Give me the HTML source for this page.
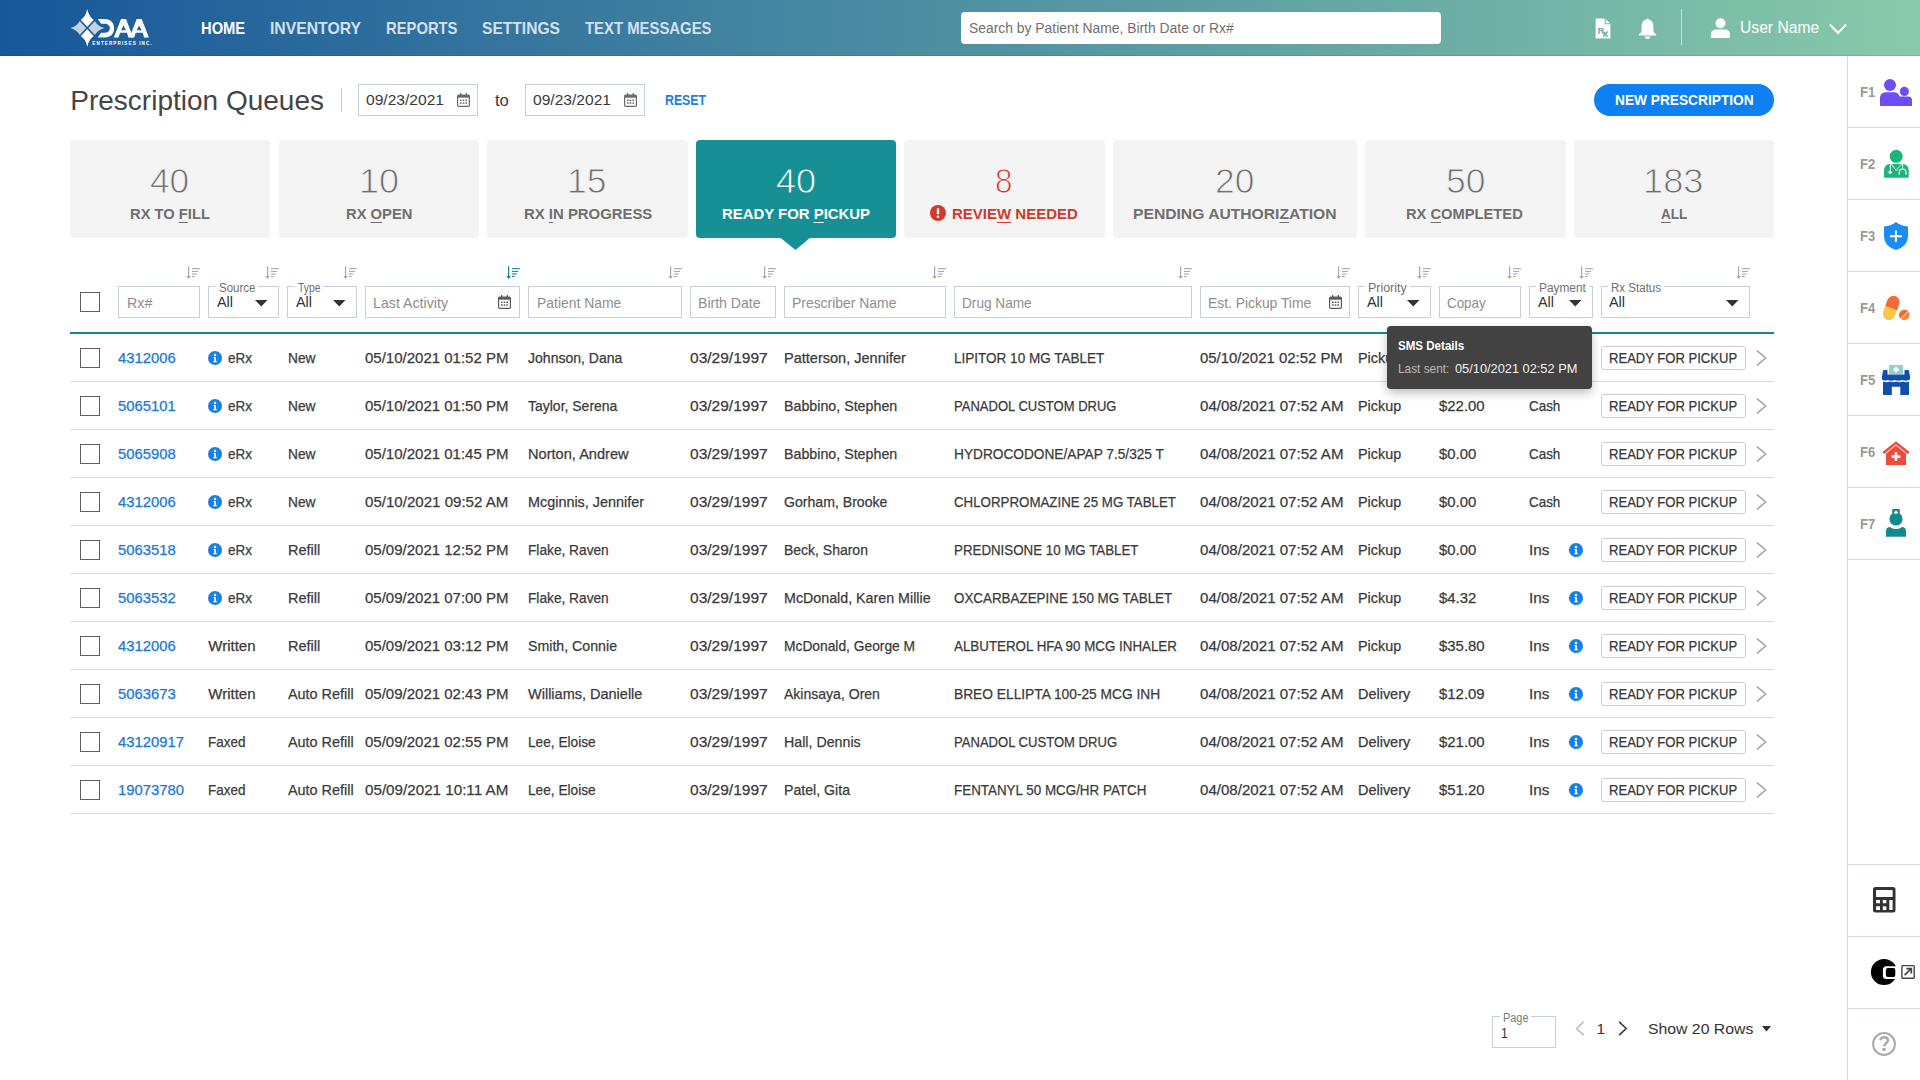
<!DOCTYPE html>
<html><head><meta charset="utf-8"><title>Prescription Queues</title>
<style>
*{box-sizing:border-box;margin:0;padding:0}
html,body{width:1920px;height:1080px;overflow:hidden;background:#fff;font-family:"Liberation Sans",sans-serif;color:#333}
.a{position:absolute;white-space:nowrap}
svg.a{overflow:visible}
</style></head><body>

<div class="a" style="left:0px;top:0px;width:1920px;height:56px;background:linear-gradient(90deg,#18579a 0%,#4f90a2 50%,#88caa9 100%)"></div>
<div class="a" style="left:0px;top:55px;width:1920px;height:1px;background:rgba(0,30,80,.12)"></div>
<svg class="a" style="left:66px;top:6px" width="92" height="44" viewBox="0 0 92 44">
<path d="M21.3,3.5 Q23,11.5 28.6,14.4 Q31,20 38.6,22 Q31,24 28.6,29.6 Q23,32.5 21.3,40.5 Q19.6,32.5 14,29.6 Q11.6,24 4.2,22 Q11.6,20 14,14.4 Q19.6,11.5 21.3,3.5 Z" fill="#c5d2e3"/>
<path d="M21.3,3.5 Q23,11.5 28.6,14.4 L21.3,22 L14,14.4 Q19.6,11.5 21.3,3.5 Z" fill="#fff"/>
<path d="M21.3,40.5 Q23,32.5 28.6,29.6 L21.3,22 L14,29.6 Q19.6,32.5 21.3,40.5 Z" fill="#fff"/>
<path d="M12.5,12.5 L30.1,31.5 M30.1,12.5 L12.5,31.5" stroke="#1d5c9c" stroke-width="1.7"/>
<path fill-rule="evenodd" d="M31.8,13 H38.5 C45,13 48.1,17 48.1,22.2 C48.1,27.4 45,31.4 38.5,31.4 H31.8 L35.1,26.7 H38.5 C42,26.7 43.9,24.8 43.9,22.2 C43.9,19.6 42,17.7 38.5,17.7 H35.1 Z" fill="#fff"/>
<path fill-rule="evenodd" d="M47.8,31.4 L55,13 H60 L67.2,31.4 H62.4 L61,26.7 H54 L52.6,31.4 Z M57.5,19.5 L55.1,24.3 H59.9 Z" fill="#fff"/>
<path fill-rule="evenodd" d="M63.5,31.4 L70.7,13 H75.7 L82.9,31.4 H78.1 L76.7,26.7 H69.7 L68.3,31.4 Z M73.2,19.5 L70.8,24.3 H75.6 Z" fill="#fff"/>
<text x="26.3" y="38.9" font-family="Liberation Sans" font-weight="bold" font-size="4.6" fill="#fff" letter-spacing="1.1">ENTERPRISES INC.</text>
</svg>
<div class="a" style="left:200.80px;top:20.200000000000003px;font-size:17px;line-height:17px;color:#fff;font-weight:bold;transform:scaleX(0.8667);transform-origin:0 0;">HOME</div>
<div class="a" style="left:270.00px;top:20.200000000000003px;font-size:17px;line-height:17px;color:#d3e0ee;font-weight:bold;transform:scaleX(0.9262);transform-origin:0 0;">INVENTORY</div>
<div class="a" style="left:386.00px;top:20.200000000000003px;font-size:17px;line-height:17px;color:#d3e0ee;font-weight:bold;transform:scaleX(0.8698);transform-origin:0 0;">REPORTS</div>
<div class="a" style="left:482.00px;top:20.200000000000003px;font-size:17px;line-height:17px;color:#d3e0ee;font-weight:bold;transform:scaleX(0.9176);transform-origin:0 0;">SETTINGS</div>
<div class="a" style="left:585.00px;top:20.200000000000003px;font-size:17px;line-height:17px;color:#d3e0ee;font-weight:bold;transform:scaleX(0.8751);transform-origin:0 0;">TEXT MESSAGES</div>
<div class="a" style="left:961px;top:12px;width:480px;height:32px;background:#fff;border-radius:4px"></div>
<div class="a" style="left:969.40px;top:21px;font-size:14px;line-height:14px;color:#6f6f6f;transform:scaleX(0.9914);transform-origin:0 0;">Search by Patient Name, Birth Date or Rx#</div>
<svg class="a" style="left:1595px;top:18px" width="16" height="21" viewBox="0 0 16 21">
<path d="M0.6,0.6 H10.2 L15.4,5.8 V20.4 H0.6 Z" fill="#fff"/>
<path d="M10.2,0.6 V5.8 H15.4" fill="none" stroke="#78b9a6" stroke-width="1.1"/>
<text x="2.6" y="15.6" font-family="Liberation Sans" font-weight="bold" font-size="9.5" fill="#6fae9e">R</text>
<path d="M8.2,13.6 L12.6,18.6 M12.6,13.6 L8.2,18.6" stroke="#6fae9e" stroke-width="1.5"/>
</svg>
<svg class="a" style="left:1638px;top:18px" width="19" height="21" viewBox="0 0 19 21">
<circle cx="9.5" cy="1.6" r="1.2" fill="#fff"/>
<path d="M9.5,1.5 C5,1.5 3.6,5 3.6,8.5 V12.5 C3.6,14.5 2.3,15.5 0.8,16.2 V17.6 H18.2 V16.2 C16.7,15.5 15.4,14.5 15.4,12.5 V8.5 C15.4,5 14,1.5 9.5,1.5 Z" fill="#fff"/>
<path d="M6.6,18.4 H12.4 C12.4,20 11,20.8 9.5,20.8 C8,20.8 6.6,20 6.6,18.4 Z" fill="#fff"/>
</svg>
<div class="a" style="left:1681px;top:9px;width:1px;height:36px;background:#b6e8d6"></div>
<svg class="a" style="left:1711px;top:18px" width="19" height="20" viewBox="0 0 19 20">
<circle cx="9.5" cy="5.3" r="5" fill="#fff"/>
<path d="M0,20 V16 C0,13.2 2,11.6 4.8,11.6 H14.2 C17,11.6 19,13.2 19,16 V20 Z" fill="#fff"/>
</svg>
<div class="a" style="left:1740.00px;top:19.75px;font-size:16px;line-height:16px;color:#fff;transform:scaleX(0.9790);transform-origin:0 0;">User Name</div>
<svg class="a" style="left:1829px;top:23px" width="18" height="12" viewBox="0 0 18 12">
<path d="M1,1.5 L9,10 L17,1.5" fill="none" stroke="#fff" stroke-width="2"/>
</svg>
<div class="a" style="left:70.30px;top:87px;font-size:28px;line-height:28px;color:#454545;">Prescription Queues</div>
<div class="a" style="left:341px;top:88px;width:1px;height:24px;background:#c6c6c6"></div>
<div class="a" style="left:358px;top:84px;width:120px;height:32px;border:1px solid #c5d0d8"></div>
<div class="a" style="left:366.40px;top:93px;font-size:14.5px;line-height:14.5px;color:#393939;transform:scaleX(1.0751);transform-origin:0 0;">09/23/2021</div>
<svg class="a" style="left:457px;top:93px" width="13" height="14" viewBox="0 0 13 14">
<rect x="0.6" y="2.1" width="11.8" height="11.3" rx="1.2" fill="none" stroke="#6a6a6a" stroke-width="1.2"/>
<rect x="0.6" y="2.1" width="11.8" height="2.6" fill="#6a6a6a"/>
<rect x="3" y="0" width="1.3" height="3" fill="#6a6a6a"/><rect x="8.7" y="0" width="1.3" height="3" fill="#6a6a6a"/>
<g fill="#6a6a6a"><rect x="3" y="6.5" width="1.6" height="1.5"/><rect x="5.7" y="6.5" width="1.6" height="1.5"/><rect x="8.4" y="6.5" width="1.6" height="1.5"/>
<rect x="3" y="9.3" width="1.6" height="1.5"/><rect x="5.7" y="9.3" width="1.6" height="1.5"/><rect x="8.4" y="9.3" width="1.6" height="1.5"/></g>
</svg>
<div class="a" style="left:494.50px;top:92px;font-size:17px;line-height:17px;color:#393939;transform:scaleX(0.9789);transform-origin:0 0;">to</div>
<div class="a" style="left:525px;top:84px;width:120px;height:32px;border:1px solid #c5d0d8"></div>
<div class="a" style="left:533.40px;top:93px;font-size:14.5px;line-height:14.5px;color:#393939;transform:scaleX(1.0751);transform-origin:0 0;">09/23/2021</div>
<svg class="a" style="left:624px;top:93px" width="13" height="14" viewBox="0 0 13 14">
<rect x="0.6" y="2.1" width="11.8" height="11.3" rx="1.2" fill="none" stroke="#6a6a6a" stroke-width="1.2"/>
<rect x="0.6" y="2.1" width="11.8" height="2.6" fill="#6a6a6a"/>
<rect x="3" y="0" width="1.3" height="3" fill="#6a6a6a"/><rect x="8.7" y="0" width="1.3" height="3" fill="#6a6a6a"/>
<g fill="#6a6a6a"><rect x="3" y="6.5" width="1.6" height="1.5"/><rect x="5.7" y="6.5" width="1.6" height="1.5"/><rect x="8.4" y="6.5" width="1.6" height="1.5"/>
<rect x="3" y="9.3" width="1.6" height="1.5"/><rect x="5.7" y="9.3" width="1.6" height="1.5"/><rect x="8.4" y="9.3" width="1.6" height="1.5"/></g>
</svg>
<div class="a" style="left:665.40px;top:93px;font-size:14px;line-height:14px;color:#1a80e6;font-weight:bold;transform:scaleX(0.8801);transform-origin:0 0;">RESET</div>
<div class="a" style="left:1594px;top:84px;width:180px;height:32px;background:#0e80f2;border-radius:16px"></div>
<div class="a" style="left:1614.80px;top:92.8px;font-size:14px;line-height:14px;color:#fff;font-weight:bold;transform:scaleX(0.9792);transform-origin:0 0;">NEW PRESCRIPTION</div>
<div class="a" style="left:70px;top:140px;width:200.4px;height:98px;background:#f4f4f4;border-radius:4px"></div>
<div class="a" style="left:278.6px;top:140px;width:200.4px;height:98px;background:#f4f4f4;border-radius:4px"></div>
<div class="a" style="left:487.2px;top:140px;width:200.4px;height:98px;background:#f4f4f4;border-radius:4px"></div>
<div class="a" style="left:695.8px;top:140px;width:200.4px;height:98px;background:#169095;border-radius:4px"></div>
<div class="a" style="left:904.4px;top:140px;width:200.4px;height:98px;background:#f4f4f4;border-radius:4px"></div>
<div class="a" style="left:1113.2px;top:140px;width:243.6px;height:98px;background:#f4f4f4;border-radius:4px"></div>
<div class="a" style="left:1365.2px;top:140px;width:200.4px;height:98px;background:#f4f4f4;border-radius:4px"></div>
<div class="a" style="left:1573.8px;top:140px;width:200.4px;height:98px;background:#f4f4f4;border-radius:4px"></div>
<svg class="a" style="left:779px;top:237px" width="33" height="14" viewBox="0 0 33 14"><polygon points="0.5,0 32,0 16.5,13" fill="#169095"/></svg>
<div class="a" style="left:150.00px;top:162.8px;font-size:35px;line-height:35px;color:#6f6f6f;transform:scaleX(1.0064);transform-origin:0 0;-webkit-text-stroke:0.9px #f4f4f4;">40</div>
<div class="a" style="left:358.70px;top:162.8px;font-size:35px;line-height:35px;color:#6f6f6f;transform:scaleX(1.0295);transform-origin:0 0;-webkit-text-stroke:0.9px #f4f4f4;">10</div>
<div class="a" style="left:566.80px;top:162.8px;font-size:35px;line-height:35px;color:#6f6f6f;transform:scaleX(1.0116);transform-origin:0 0;-webkit-text-stroke:0.9px #f4f4f4;">15</div>
<div class="a" style="left:775.60px;top:162.8px;font-size:35px;line-height:35px;color:#fff;transform:scaleX(1.0295);transform-origin:0 0;-webkit-text-stroke:0.9px #169095;">40</div>
<div class="a" style="left:994.50px;top:162.8px;font-size:35px;line-height:35px;color:#cf3a2a;transform:scaleX(0.8997);transform-origin:0 0;-webkit-text-stroke:0.9px #f4f4f4;">8</div>
<div class="a" style="left:1215.40px;top:162.8px;font-size:35px;line-height:35px;color:#6f6f6f;transform:scaleX(1.0116);transform-origin:0 0;-webkit-text-stroke:0.9px #f4f4f4;">20</div>
<div class="a" style="left:1445.60px;top:162.8px;font-size:35px;line-height:35px;color:#6f6f6f;transform:scaleX(1.0141);transform-origin:0 0;-webkit-text-stroke:0.9px #f4f4f4;">50</div>
<div class="a" style="left:1643.40px;top:162.8px;font-size:35px;line-height:35px;color:#6f6f6f;transform:scaleX(1.0360);transform-origin:0 0;-webkit-text-stroke:0.9px #f4f4f4;">183</div>
<div class="a" style="left:130.10px;top:205.8px;font-size:15px;line-height:15px;color:#6f6f6f;font-weight:bold;transform:scaleX(0.9816);transform-origin:0 0;">RX TO <span style="text-decoration:underline;text-underline-offset:3px;text-decoration-thickness:1px">F</span>ILL</div>
<div class="a" style="left:345.60px;top:205.8px;font-size:15px;line-height:15px;color:#6f6f6f;font-weight:bold;transform:scaleX(0.9837);transform-origin:0 0;">RX <span style="text-decoration:underline;text-underline-offset:3px;text-decoration-thickness:1px">O</span>PEN</div>
<div class="a" style="left:523.70px;top:205.8px;font-size:15px;line-height:15px;color:#6f6f6f;font-weight:bold;transform:scaleX(0.9930);transform-origin:0 0;">RX <span style="text-decoration:underline;text-underline-offset:3px;text-decoration-thickness:1px">I</span>N PROGRESS</div>
<div class="a" style="left:722.00px;top:205.8px;font-size:15px;line-height:15px;color:#fff;font-weight:bold;transform:scaleX(0.9940);transform-origin:0 0;">READY FOR <span style="text-decoration:underline;text-underline-offset:3px;text-decoration-thickness:1px">P</span>ICKUP</div>
<div class="a" style="left:952.00px;top:205.8px;font-size:15px;line-height:15px;color:#cf3a2a;font-weight:bold;">REVIE<span style="text-decoration:underline;text-underline-offset:3px;text-decoration-thickness:1px">W</span> NEEDED</div>
<div class="a" style="left:1132.60px;top:205.8px;font-size:15px;line-height:15px;color:#6f6f6f;font-weight:bold;transform:scaleX(1.0441);transform-origin:0 0;">PENDING AUTHORI<span style="text-decoration:underline;text-underline-offset:3px;text-decoration-thickness:1px">Z</span>ATION</div>
<div class="a" style="left:1406.40px;top:205.8px;font-size:15px;line-height:15px;color:#6f6f6f;font-weight:bold;transform:scaleX(0.9794);transform-origin:0 0;">RX <span style="text-decoration:underline;text-underline-offset:3px;text-decoration-thickness:1px">C</span>OMPLETED</div>
<div class="a" style="left:1660.90px;top:205.8px;font-size:15px;line-height:15px;color:#6f6f6f;font-weight:bold;transform:scaleX(0.8954);transform-origin:0 0;"><span style="text-decoration:underline;text-underline-offset:3px;text-decoration-thickness:1px">A</span>LL</div>
<svg class="a" style="left:930px;top:205px" width="16" height="16" viewBox="0 0 16 16">
<circle cx="8" cy="8" r="8" fill="#cf3a2a"/><rect x="6.8" y="3.3" width="2.4" height="6" rx="0.6" fill="#fff"/><circle cx="8" cy="11.8" r="1.3" fill="#fff"/></svg>
<div class="a" style="left:80px;top:292px;width:20px;height:20px;border:1.6px solid #5f5f5f;background:#fff"></div>
<svg class="a" style="left:186px;top:266px" width="14" height="13" viewBox="0 0 14 13"><path d="M2.6,0.3 V11.5" stroke="#a9a9a9" stroke-width="1.2"/><polygon points="0.3,10 4.9,10 2.6,13" fill="#a9a9a9"/><g stroke="#a9a9a9" stroke-width="1.1"><path d="M6,2.6 H13.9"/><path d="M6,5.4 H12"/><path d="M6,8 H10.7"/><path d="M6,10.5 H8.7"/></g></svg>
<svg class="a" style="left:265px;top:266px" width="14" height="13" viewBox="0 0 14 13"><path d="M2.6,0.3 V11.5" stroke="#a9a9a9" stroke-width="1.2"/><polygon points="0.3,10 4.9,10 2.6,13" fill="#a9a9a9"/><g stroke="#a9a9a9" stroke-width="1.1"><path d="M6,2.6 H13.9"/><path d="M6,5.4 H12"/><path d="M6,8 H10.7"/><path d="M6,10.5 H8.7"/></g></svg>
<svg class="a" style="left:343px;top:266px" width="14" height="13" viewBox="0 0 14 13"><path d="M2.6,0.3 V11.5" stroke="#a9a9a9" stroke-width="1.2"/><polygon points="0.3,10 4.9,10 2.6,13" fill="#a9a9a9"/><g stroke="#a9a9a9" stroke-width="1.1"><path d="M6,2.6 H13.9"/><path d="M6,5.4 H12"/><path d="M6,8 H10.7"/><path d="M6,10.5 H8.7"/></g></svg>
<svg class="a" style="left:506px;top:266px" width="14" height="13" viewBox="0 0 14 13"><path d="M2.6,0.3 V11.5" stroke="#17868c" stroke-width="1.2"/><polygon points="0.3,10 4.9,10 2.6,13" fill="#17868c"/><g stroke="#17868c" stroke-width="1.1"><path d="M6,2.6 H13.9"/><path d="M6,5.4 H12"/><path d="M6,8 H10.7"/><path d="M6,10.5 H8.7"/></g></svg>
<svg class="a" style="left:668px;top:266px" width="14" height="13" viewBox="0 0 14 13"><path d="M2.6,0.3 V11.5" stroke="#a9a9a9" stroke-width="1.2"/><polygon points="0.3,10 4.9,10 2.6,13" fill="#a9a9a9"/><g stroke="#a9a9a9" stroke-width="1.1"><path d="M6,2.6 H13.9"/><path d="M6,5.4 H12"/><path d="M6,8 H10.7"/><path d="M6,10.5 H8.7"/></g></svg>
<svg class="a" style="left:762px;top:266px" width="14" height="13" viewBox="0 0 14 13"><path d="M2.6,0.3 V11.5" stroke="#a9a9a9" stroke-width="1.2"/><polygon points="0.3,10 4.9,10 2.6,13" fill="#a9a9a9"/><g stroke="#a9a9a9" stroke-width="1.1"><path d="M6,2.6 H13.9"/><path d="M6,5.4 H12"/><path d="M6,8 H10.7"/><path d="M6,10.5 H8.7"/></g></svg>
<svg class="a" style="left:932px;top:266px" width="14" height="13" viewBox="0 0 14 13"><path d="M2.6,0.3 V11.5" stroke="#a9a9a9" stroke-width="1.2"/><polygon points="0.3,10 4.9,10 2.6,13" fill="#a9a9a9"/><g stroke="#a9a9a9" stroke-width="1.1"><path d="M6,2.6 H13.9"/><path d="M6,5.4 H12"/><path d="M6,8 H10.7"/><path d="M6,10.5 H8.7"/></g></svg>
<svg class="a" style="left:1178px;top:266px" width="14" height="13" viewBox="0 0 14 13"><path d="M2.6,0.3 V11.5" stroke="#a9a9a9" stroke-width="1.2"/><polygon points="0.3,10 4.9,10 2.6,13" fill="#a9a9a9"/><g stroke="#a9a9a9" stroke-width="1.1"><path d="M6,2.6 H13.9"/><path d="M6,5.4 H12"/><path d="M6,8 H10.7"/><path d="M6,10.5 H8.7"/></g></svg>
<svg class="a" style="left:1336px;top:266px" width="14" height="13" viewBox="0 0 14 13"><path d="M2.6,0.3 V11.5" stroke="#a9a9a9" stroke-width="1.2"/><polygon points="0.3,10 4.9,10 2.6,13" fill="#a9a9a9"/><g stroke="#a9a9a9" stroke-width="1.1"><path d="M6,2.6 H13.9"/><path d="M6,5.4 H12"/><path d="M6,8 H10.7"/><path d="M6,10.5 H8.7"/></g></svg>
<svg class="a" style="left:1417px;top:266px" width="14" height="13" viewBox="0 0 14 13"><path d="M2.6,0.3 V11.5" stroke="#a9a9a9" stroke-width="1.2"/><polygon points="0.3,10 4.9,10 2.6,13" fill="#a9a9a9"/><g stroke="#a9a9a9" stroke-width="1.1"><path d="M6,2.6 H13.9"/><path d="M6,5.4 H12"/><path d="M6,8 H10.7"/><path d="M6,10.5 H8.7"/></g></svg>
<svg class="a" style="left:1507px;top:266px" width="14" height="13" viewBox="0 0 14 13"><path d="M2.6,0.3 V11.5" stroke="#a9a9a9" stroke-width="1.2"/><polygon points="0.3,10 4.9,10 2.6,13" fill="#a9a9a9"/><g stroke="#a9a9a9" stroke-width="1.1"><path d="M6,2.6 H13.9"/><path d="M6,5.4 H12"/><path d="M6,8 H10.7"/><path d="M6,10.5 H8.7"/></g></svg>
<svg class="a" style="left:1579px;top:266px" width="14" height="13" viewBox="0 0 14 13"><path d="M2.6,0.3 V11.5" stroke="#a9a9a9" stroke-width="1.2"/><polygon points="0.3,10 4.9,10 2.6,13" fill="#a9a9a9"/><g stroke="#a9a9a9" stroke-width="1.1"><path d="M6,2.6 H13.9"/><path d="M6,5.4 H12"/><path d="M6,8 H10.7"/><path d="M6,10.5 H8.7"/></g></svg>
<svg class="a" style="left:1736px;top:266px" width="14" height="13" viewBox="0 0 14 13"><path d="M2.6,0.3 V11.5" stroke="#a9a9a9" stroke-width="1.2"/><polygon points="0.3,10 4.9,10 2.6,13" fill="#a9a9a9"/><g stroke="#a9a9a9" stroke-width="1.1"><path d="M6,2.6 H13.9"/><path d="M6,5.4 H12"/><path d="M6,8 H10.7"/><path d="M6,10.5 H8.7"/></g></svg>
<div class="a" style="left:118px;top:286px;width:82px;height:32px;border:1px solid #c5d0d8"></div>
<div class="a" style="left:126.60px;top:294.5px;font-size:15px;line-height:15px;color:#8e8e8e;transform:scaleX(0.9513);transform-origin:0 0;">Rx#</div>
<div class="a" style="left:208px;top:286px;width:71px;height:32px;border:1px solid #c5d0d8"></div>
<div class="a" style="left:215.6px;top:285px;width:42.400000000000006px;height:3px;background:#fff"></div>
<div class="a" style="left:218.60px;top:282px;font-size:12px;line-height:12px;color:#6f6f6f;transform:scaleX(0.9579);transform-origin:0 0;">Source</div>
<div class="a" style="left:216.80px;top:293.8px;font-size:15px;line-height:15px;color:#333;transform:scaleX(0.9610);transform-origin:0 0;">All</div>
<div class="a" style="left:287px;top:286px;width:70px;height:32px;border:1px solid #c5d0d8"></div>
<div class="a" style="left:294.5px;top:285px;width:28.5px;height:3px;background:#fff"></div>
<div class="a" style="left:297.50px;top:282px;font-size:12px;line-height:12px;color:#6f6f6f;transform:scaleX(0.8654);transform-origin:0 0;">Type</div>
<div class="a" style="left:295.80px;top:293.8px;font-size:15px;line-height:15px;color:#333;transform:scaleX(0.9610);transform-origin:0 0;">All</div>
<div class="a" style="left:365px;top:286px;width:155px;height:32px;border:1px solid #c5d0d8"></div>
<div class="a" style="left:373.30px;top:294.7px;font-size:15px;line-height:15px;color:#8e8e8e;transform:scaleX(0.9470);transform-origin:0 0;">Last Activity</div>
<svg class="a" style="left:498px;top:295px" width="13" height="14" viewBox="0 0 13 14">
<rect x="0.6" y="2.1" width="11.8" height="11.3" rx="1.2" fill="none" stroke="#5a5a5a" stroke-width="1.2"/>
<rect x="0.6" y="2.1" width="11.8" height="2.6" fill="#5a5a5a"/>
<rect x="3" y="0" width="1.3" height="3" fill="#5a5a5a"/><rect x="8.7" y="0" width="1.3" height="3" fill="#5a5a5a"/>
<g fill="#5a5a5a"><rect x="3" y="6.5" width="1.6" height="1.5"/><rect x="5.7" y="6.5" width="1.6" height="1.5"/><rect x="8.4" y="6.5" width="1.6" height="1.5"/>
<rect x="3" y="9.3" width="1.6" height="1.5"/><rect x="5.7" y="9.3" width="1.6" height="1.5"/><rect x="8.4" y="9.3" width="1.6" height="1.5"/></g>
</svg>
<div class="a" style="left:528px;top:286px;width:154px;height:32px;border:1px solid #c5d0d8"></div>
<div class="a" style="left:536.70px;top:294.7px;font-size:15px;line-height:15px;color:#8e8e8e;transform:scaleX(0.9274);transform-origin:0 0;">Patient Name</div>
<div class="a" style="left:690px;top:286px;width:86px;height:32px;border:1px solid #c5d0d8"></div>
<div class="a" style="left:698.40px;top:294.7px;font-size:15px;line-height:15px;color:#8e8e8e;transform:scaleX(0.9385);transform-origin:0 0;">Birth Date</div>
<div class="a" style="left:784px;top:286px;width:162px;height:32px;border:1px solid #c5d0d8"></div>
<div class="a" style="left:792.20px;top:294.7px;font-size:15px;line-height:15px;color:#8e8e8e;transform:scaleX(0.9276);transform-origin:0 0;">Prescriber Name</div>
<div class="a" style="left:954px;top:286px;width:238px;height:32px;border:1px solid #c5d0d8"></div>
<div class="a" style="left:962.20px;top:294.7px;font-size:15px;line-height:15px;color:#8e8e8e;transform:scaleX(0.9087);transform-origin:0 0;">Drug Name</div>
<div class="a" style="left:1200px;top:286px;width:150px;height:32px;border:1px solid #c5d0d8"></div>
<div class="a" style="left:1208.10px;top:294.7px;font-size:15px;line-height:15px;color:#8e8e8e;transform:scaleX(0.9235);transform-origin:0 0;">Est. Pickup Time</div>
<svg class="a" style="left:1329px;top:295px" width="13" height="14" viewBox="0 0 13 14">
<rect x="0.6" y="2.1" width="11.8" height="11.3" rx="1.2" fill="none" stroke="#5a5a5a" stroke-width="1.2"/>
<rect x="0.6" y="2.1" width="11.8" height="2.6" fill="#5a5a5a"/>
<rect x="3" y="0" width="1.3" height="3" fill="#5a5a5a"/><rect x="8.7" y="0" width="1.3" height="3" fill="#5a5a5a"/>
<g fill="#5a5a5a"><rect x="3" y="6.5" width="1.6" height="1.5"/><rect x="5.7" y="6.5" width="1.6" height="1.5"/><rect x="8.4" y="6.5" width="1.6" height="1.5"/>
<rect x="3" y="9.3" width="1.6" height="1.5"/><rect x="5.7" y="9.3" width="1.6" height="1.5"/><rect x="8.4" y="9.3" width="1.6" height="1.5"/></g>
</svg>
<div class="a" style="left:1358px;top:286px;width:73px;height:32px;border:1px solid #c5d0d8"></div>
<div class="a" style="left:1365px;top:285px;width:44.59999999999991px;height:3px;background:#fff"></div>
<div class="a" style="left:1368.00px;top:282px;font-size:12px;line-height:12px;color:#6f6f6f;transform:scaleX(1.0335);transform-origin:0 0;">Priority</div>
<div class="a" style="left:1366.60px;top:293.8px;font-size:15px;line-height:15px;color:#333;transform:scaleX(0.9610);transform-origin:0 0;">All</div>
<div class="a" style="left:1439px;top:286px;width:82px;height:32px;border:1px solid #c5d0d8"></div>
<div class="a" style="left:1446.90px;top:294.7px;font-size:15px;line-height:15px;color:#8e8e8e;transform:scaleX(0.8927);transform-origin:0 0;">Copay</div>
<div class="a" style="left:1529px;top:286px;width:64px;height:32px;border:1px solid #c5d0d8"></div>
<div class="a" style="left:1536.4px;top:285px;width:52.84999999999991px;height:3px;background:#fff"></div>
<div class="a" style="left:1539.40px;top:282px;font-size:12px;line-height:12px;color:#6f6f6f;transform:scaleX(0.9894);transform-origin:0 0;">Payment</div>
<div class="a" style="left:1537.50px;top:293.8px;font-size:15px;line-height:15px;color:#333;transform:scaleX(0.9610);transform-origin:0 0;">All</div>
<div class="a" style="left:1601px;top:286px;width:149px;height:32px;border:1px solid #c5d0d8"></div>
<div class="a" style="left:1608.25px;top:285px;width:56.0px;height:3px;background:#fff"></div>
<div class="a" style="left:1611.25px;top:282px;font-size:12px;line-height:12px;color:#6f6f6f;transform:scaleX(0.9615);transform-origin:0 0;">Rx Status</div>
<div class="a" style="left:1609.40px;top:293.8px;font-size:15px;line-height:15px;color:#333;transform:scaleX(0.9610);transform-origin:0 0;">All</div>
<svg class="a" style="left:255px;top:300px" width="12.5" height="6.5" viewBox="0 0 12.5 6.5"><polygon points="0,0 12.5,0 6.25,6.5" fill="#333"/></svg>
<svg class="a" style="left:333px;top:300px" width="12.5" height="6.5" viewBox="0 0 12.5 6.5"><polygon points="0,0 12.5,0 6.25,6.5" fill="#333"/></svg>
<svg class="a" style="left:1407px;top:300px" width="12.5" height="6.5" viewBox="0 0 12.5 6.5"><polygon points="0,0 12.5,0 6.25,6.5" fill="#333"/></svg>
<svg class="a" style="left:1569px;top:300px" width="12.5" height="6.5" viewBox="0 0 12.5 6.5"><polygon points="0,0 12.5,0 6.25,6.5" fill="#333"/></svg>
<svg class="a" style="left:1726px;top:300px" width="12.5" height="6.5" viewBox="0 0 12.5 6.5"><polygon points="0,0 12.5,0 6.25,6.5" fill="#333"/></svg>
<div class="a" style="left:70px;top:332px;width:1704px;height:2px;background:#17868c"></div>
<div class="a" style="left:80px;top:348px;width:20px;height:20px;border:1.6px solid #5f5f5f;background:#fff"></div>
<div class="a" style="left:118.30px;top:350px;font-size:15px;line-height:15px;color:#1a76dc;transform:scaleX(0.9880);transform-origin:0 0;-webkit-text-stroke:0.25px #1a76dc;">4312006</div>
<svg class="a" style="left:208px;top:351px" width="14" height="14" viewBox="0 0 14 14"><circle cx="7" cy="7" r="7" fill="#1480e8"/><circle cx="7" cy="3.9" r="1.25" fill="#fff"/><path d="M5.4,6 H8 V10.2 H9 V11.3 H5.2 V10.2 H6.2 V7.1 H5.4 Z" fill="#fff"/></svg>
<div class="a" style="left:228.30px;top:350px;font-size:15px;line-height:15px;color:#3a3a3a;transform:scaleX(0.8989);transform-origin:0 0;-webkit-text-stroke:0.25px #3a3a3a;">eRx</div>
<div class="a" style="left:287.70px;top:350px;font-size:15px;line-height:15px;color:#3a3a3a;transform:scaleX(0.9169);transform-origin:0 0;-webkit-text-stroke:0.25px #3a3a3a;">New</div>
<div class="a" style="left:365.00px;top:350px;font-size:15px;line-height:15px;color:#3a3a3a;-webkit-text-stroke:0.25px #3a3a3a;">05/10/2021 01:52 PM</div>
<div class="a" style="left:528.30px;top:350px;font-size:15px;line-height:15px;color:#3a3a3a;transform:scaleX(0.9356);transform-origin:0 0;-webkit-text-stroke:0.25px #3a3a3a;">Johnson, Dana</div>
<div class="a" style="left:690.30px;top:350px;font-size:15px;line-height:15px;color:#3a3a3a;transform:scaleX(1.0353);transform-origin:0 0;-webkit-text-stroke:0.25px #3a3a3a;">03/29/1997</div>
<div class="a" style="left:784.30px;top:350px;font-size:15px;line-height:15px;color:#3a3a3a;transform:scaleX(0.9682);transform-origin:0 0;-webkit-text-stroke:0.25px #3a3a3a;">Patterson, Jennifer</div>
<div class="a" style="left:954.40px;top:350px;font-size:15px;line-height:15px;color:#3a3a3a;transform:scaleX(0.9016);transform-origin:0 0;-webkit-text-stroke:0.25px #3a3a3a;">LIPITOR 10 MG TABLET</div>
<div class="a" style="left:1200.30px;top:350px;font-size:15px;line-height:15px;color:#3a3a3a;transform:scaleX(0.9955);transform-origin:0 0;-webkit-text-stroke:0.25px #3a3a3a;">05/10/2021 02:52 PM</div>
<div class="a" style="left:1358.10px;top:350px;font-size:15px;line-height:15px;color:#3a3a3a;transform:scaleX(0.9589);transform-origin:0 0;-webkit-text-stroke:0.25px #3a3a3a;">Pickup</div>
<div class="a" style="left:1439.00px;top:350px;font-size:15px;line-height:15px;color:#3a3a3a;transform:scaleX(0.9920);transform-origin:0 0;-webkit-text-stroke:0.25px #3a3a3a;">$0.00</div>
<div class="a" style="left:1529.00px;top:350px;font-size:15px;line-height:15px;color:#3a3a3a;transform:scaleX(0.8943);transform-origin:0 0;-webkit-text-stroke:0.25px #3a3a3a;">Cash</div>
<div class="a" style="left:1601px;top:346px;width:145px;height:24px;border:1px solid #c8d0d6;border-radius:3px;background:#fff"></div>
<div class="a" style="left:1609.40px;top:350.5px;font-size:14px;line-height:14px;color:#363636;transform:scaleX(0.9320);transform-origin:0 0;-webkit-text-stroke:0.25px #3a3a3a;">READY FOR PICKUP</div>
<svg class="a" style="left:1756px;top:350px" width="11" height="16" viewBox="0 0 11 16"><path d="M1,0.6 L9.6,8 L1,15.4" fill="none" stroke="#a3a3a3" stroke-width="1.5"/></svg>
<div class="a" style="left:70px;top:381px;width:1704px;height:1px;background:#d6dde2"></div>
<div class="a" style="left:80px;top:396px;width:20px;height:20px;border:1.6px solid #5f5f5f;background:#fff"></div>
<div class="a" style="left:118.30px;top:398px;font-size:15px;line-height:15px;color:#1a76dc;transform:scaleX(0.9880);transform-origin:0 0;-webkit-text-stroke:0.25px #1a76dc;">5065101</div>
<svg class="a" style="left:208px;top:399px" width="14" height="14" viewBox="0 0 14 14"><circle cx="7" cy="7" r="7" fill="#1480e8"/><circle cx="7" cy="3.9" r="1.25" fill="#fff"/><path d="M5.4,6 H8 V10.2 H9 V11.3 H5.2 V10.2 H6.2 V7.1 H5.4 Z" fill="#fff"/></svg>
<div class="a" style="left:228.30px;top:398px;font-size:15px;line-height:15px;color:#3a3a3a;transform:scaleX(0.8989);transform-origin:0 0;-webkit-text-stroke:0.25px #3a3a3a;">eRx</div>
<div class="a" style="left:287.70px;top:398px;font-size:15px;line-height:15px;color:#3a3a3a;transform:scaleX(0.9169);transform-origin:0 0;-webkit-text-stroke:0.25px #3a3a3a;">New</div>
<div class="a" style="left:365.00px;top:398px;font-size:15px;line-height:15px;color:#3a3a3a;-webkit-text-stroke:0.25px #3a3a3a;">05/10/2021 01:50 PM</div>
<div class="a" style="left:528.30px;top:398px;font-size:15px;line-height:15px;color:#3a3a3a;transform:scaleX(0.9322);transform-origin:0 0;-webkit-text-stroke:0.25px #3a3a3a;">Taylor, Serena</div>
<div class="a" style="left:690.30px;top:398px;font-size:15px;line-height:15px;color:#3a3a3a;transform:scaleX(1.0353);transform-origin:0 0;-webkit-text-stroke:0.25px #3a3a3a;">03/29/1997</div>
<div class="a" style="left:784.30px;top:398px;font-size:15px;line-height:15px;color:#3a3a3a;transform:scaleX(0.9493);transform-origin:0 0;-webkit-text-stroke:0.25px #3a3a3a;">Babbino, Stephen</div>
<div class="a" style="left:954.40px;top:398px;font-size:15px;line-height:15px;color:#3a3a3a;transform:scaleX(0.8678);transform-origin:0 0;-webkit-text-stroke:0.25px #3a3a3a;">PANADOL CUSTOM DRUG</div>
<div class="a" style="left:1200.30px;top:398px;font-size:15px;line-height:15px;color:#3a3a3a;transform:scaleX(1.0060);transform-origin:0 0;-webkit-text-stroke:0.25px #3a3a3a;">04/08/2021 07:52 AM</div>
<div class="a" style="left:1358.10px;top:398px;font-size:15px;line-height:15px;color:#3a3a3a;transform:scaleX(0.9589);transform-origin:0 0;-webkit-text-stroke:0.25px #3a3a3a;">Pickup</div>
<div class="a" style="left:1439.00px;top:398px;font-size:15px;line-height:15px;color:#3a3a3a;transform:scaleX(0.9956);transform-origin:0 0;-webkit-text-stroke:0.25px #3a3a3a;">$22.00</div>
<div class="a" style="left:1529.00px;top:398px;font-size:15px;line-height:15px;color:#3a3a3a;transform:scaleX(0.8943);transform-origin:0 0;-webkit-text-stroke:0.25px #3a3a3a;">Cash</div>
<div class="a" style="left:1601px;top:394px;width:145px;height:24px;border:1px solid #c8d0d6;border-radius:3px;background:#fff"></div>
<div class="a" style="left:1609.40px;top:398.5px;font-size:14px;line-height:14px;color:#363636;transform:scaleX(0.9320);transform-origin:0 0;-webkit-text-stroke:0.25px #3a3a3a;">READY FOR PICKUP</div>
<svg class="a" style="left:1756px;top:398px" width="11" height="16" viewBox="0 0 11 16"><path d="M1,0.6 L9.6,8 L1,15.4" fill="none" stroke="#a3a3a3" stroke-width="1.5"/></svg>
<div class="a" style="left:70px;top:429px;width:1704px;height:1px;background:#d6dde2"></div>
<div class="a" style="left:80px;top:444px;width:20px;height:20px;border:1.6px solid #5f5f5f;background:#fff"></div>
<div class="a" style="left:118.30px;top:446px;font-size:15px;line-height:15px;color:#1a76dc;transform:scaleX(0.9880);transform-origin:0 0;-webkit-text-stroke:0.25px #1a76dc;">5065908</div>
<svg class="a" style="left:208px;top:447px" width="14" height="14" viewBox="0 0 14 14"><circle cx="7" cy="7" r="7" fill="#1480e8"/><circle cx="7" cy="3.9" r="1.25" fill="#fff"/><path d="M5.4,6 H8 V10.2 H9 V11.3 H5.2 V10.2 H6.2 V7.1 H5.4 Z" fill="#fff"/></svg>
<div class="a" style="left:228.30px;top:446px;font-size:15px;line-height:15px;color:#3a3a3a;transform:scaleX(0.8989);transform-origin:0 0;-webkit-text-stroke:0.25px #3a3a3a;">eRx</div>
<div class="a" style="left:287.70px;top:446px;font-size:15px;line-height:15px;color:#3a3a3a;transform:scaleX(0.9169);transform-origin:0 0;-webkit-text-stroke:0.25px #3a3a3a;">New</div>
<div class="a" style="left:365.00px;top:446px;font-size:15px;line-height:15px;color:#3a3a3a;-webkit-text-stroke:0.25px #3a3a3a;">05/10/2021 01:45 PM</div>
<div class="a" style="left:528.30px;top:446px;font-size:15px;line-height:15px;color:#3a3a3a;transform:scaleX(0.9734);transform-origin:0 0;-webkit-text-stroke:0.25px #3a3a3a;">Norton, Andrew</div>
<div class="a" style="left:690.30px;top:446px;font-size:15px;line-height:15px;color:#3a3a3a;transform:scaleX(1.0353);transform-origin:0 0;-webkit-text-stroke:0.25px #3a3a3a;">03/29/1997</div>
<div class="a" style="left:784.30px;top:446px;font-size:15px;line-height:15px;color:#3a3a3a;transform:scaleX(0.9493);transform-origin:0 0;-webkit-text-stroke:0.25px #3a3a3a;">Babbino, Stephen</div>
<div class="a" style="left:954.40px;top:446px;font-size:15px;line-height:15px;color:#3a3a3a;transform:scaleX(0.9122);transform-origin:0 0;-webkit-text-stroke:0.25px #3a3a3a;">HYDROCODONE/APAP 7.5/325 T</div>
<div class="a" style="left:1200.30px;top:446px;font-size:15px;line-height:15px;color:#3a3a3a;transform:scaleX(1.0060);transform-origin:0 0;-webkit-text-stroke:0.25px #3a3a3a;">04/08/2021 07:52 AM</div>
<div class="a" style="left:1358.10px;top:446px;font-size:15px;line-height:15px;color:#3a3a3a;transform:scaleX(0.9589);transform-origin:0 0;-webkit-text-stroke:0.25px #3a3a3a;">Pickup</div>
<div class="a" style="left:1439.00px;top:446px;font-size:15px;line-height:15px;color:#3a3a3a;transform:scaleX(0.9920);transform-origin:0 0;-webkit-text-stroke:0.25px #3a3a3a;">$0.00</div>
<div class="a" style="left:1529.00px;top:446px;font-size:15px;line-height:15px;color:#3a3a3a;transform:scaleX(0.8943);transform-origin:0 0;-webkit-text-stroke:0.25px #3a3a3a;">Cash</div>
<div class="a" style="left:1601px;top:442px;width:145px;height:24px;border:1px solid #c8d0d6;border-radius:3px;background:#fff"></div>
<div class="a" style="left:1609.40px;top:446.5px;font-size:14px;line-height:14px;color:#363636;transform:scaleX(0.9320);transform-origin:0 0;-webkit-text-stroke:0.25px #3a3a3a;">READY FOR PICKUP</div>
<svg class="a" style="left:1756px;top:446px" width="11" height="16" viewBox="0 0 11 16"><path d="M1,0.6 L9.6,8 L1,15.4" fill="none" stroke="#a3a3a3" stroke-width="1.5"/></svg>
<div class="a" style="left:70px;top:477px;width:1704px;height:1px;background:#d6dde2"></div>
<div class="a" style="left:80px;top:492px;width:20px;height:20px;border:1.6px solid #5f5f5f;background:#fff"></div>
<div class="a" style="left:118.30px;top:494px;font-size:15px;line-height:15px;color:#1a76dc;transform:scaleX(0.9880);transform-origin:0 0;-webkit-text-stroke:0.25px #1a76dc;">4312006</div>
<svg class="a" style="left:208px;top:495px" width="14" height="14" viewBox="0 0 14 14"><circle cx="7" cy="7" r="7" fill="#1480e8"/><circle cx="7" cy="3.9" r="1.25" fill="#fff"/><path d="M5.4,6 H8 V10.2 H9 V11.3 H5.2 V10.2 H6.2 V7.1 H5.4 Z" fill="#fff"/></svg>
<div class="a" style="left:228.30px;top:494px;font-size:15px;line-height:15px;color:#3a3a3a;transform:scaleX(0.8989);transform-origin:0 0;-webkit-text-stroke:0.25px #3a3a3a;">eRx</div>
<div class="a" style="left:287.70px;top:494px;font-size:15px;line-height:15px;color:#3a3a3a;transform:scaleX(0.9169);transform-origin:0 0;-webkit-text-stroke:0.25px #3a3a3a;">New</div>
<div class="a" style="left:365.00px;top:494px;font-size:15px;line-height:15px;color:#3a3a3a;transform:scaleX(1.0049);transform-origin:0 0;-webkit-text-stroke:0.25px #3a3a3a;">05/10/2021 09:52 AM</div>
<div class="a" style="left:528.30px;top:494px;font-size:15px;line-height:15px;color:#3a3a3a;transform:scaleX(0.9595);transform-origin:0 0;-webkit-text-stroke:0.25px #3a3a3a;">Mcginnis, Jennifer</div>
<div class="a" style="left:690.30px;top:494px;font-size:15px;line-height:15px;color:#3a3a3a;transform:scaleX(1.0353);transform-origin:0 0;-webkit-text-stroke:0.25px #3a3a3a;">03/29/1997</div>
<div class="a" style="left:784.30px;top:494px;font-size:15px;line-height:15px;color:#3a3a3a;transform:scaleX(0.9396);transform-origin:0 0;-webkit-text-stroke:0.25px #3a3a3a;">Gorham, Brooke</div>
<div class="a" style="left:954.40px;top:494px;font-size:15px;line-height:15px;color:#3a3a3a;transform:scaleX(0.8868);transform-origin:0 0;-webkit-text-stroke:0.25px #3a3a3a;">CHLORPROMAZINE 25 MG TABLET</div>
<div class="a" style="left:1200.30px;top:494px;font-size:15px;line-height:15px;color:#3a3a3a;transform:scaleX(1.0060);transform-origin:0 0;-webkit-text-stroke:0.25px #3a3a3a;">04/08/2021 07:52 AM</div>
<div class="a" style="left:1358.10px;top:494px;font-size:15px;line-height:15px;color:#3a3a3a;transform:scaleX(0.9589);transform-origin:0 0;-webkit-text-stroke:0.25px #3a3a3a;">Pickup</div>
<div class="a" style="left:1439.00px;top:494px;font-size:15px;line-height:15px;color:#3a3a3a;transform:scaleX(0.9920);transform-origin:0 0;-webkit-text-stroke:0.25px #3a3a3a;">$0.00</div>
<div class="a" style="left:1529.00px;top:494px;font-size:15px;line-height:15px;color:#3a3a3a;transform:scaleX(0.8943);transform-origin:0 0;-webkit-text-stroke:0.25px #3a3a3a;">Cash</div>
<div class="a" style="left:1601px;top:490px;width:145px;height:24px;border:1px solid #c8d0d6;border-radius:3px;background:#fff"></div>
<div class="a" style="left:1609.40px;top:494.5px;font-size:14px;line-height:14px;color:#363636;transform:scaleX(0.9320);transform-origin:0 0;-webkit-text-stroke:0.25px #3a3a3a;">READY FOR PICKUP</div>
<svg class="a" style="left:1756px;top:494px" width="11" height="16" viewBox="0 0 11 16"><path d="M1,0.6 L9.6,8 L1,15.4" fill="none" stroke="#a3a3a3" stroke-width="1.5"/></svg>
<div class="a" style="left:70px;top:525px;width:1704px;height:1px;background:#d6dde2"></div>
<div class="a" style="left:80px;top:540px;width:20px;height:20px;border:1.6px solid #5f5f5f;background:#fff"></div>
<div class="a" style="left:118.30px;top:542px;font-size:15px;line-height:15px;color:#1a76dc;transform:scaleX(0.9880);transform-origin:0 0;-webkit-text-stroke:0.25px #1a76dc;">5063518</div>
<svg class="a" style="left:208px;top:543px" width="14" height="14" viewBox="0 0 14 14"><circle cx="7" cy="7" r="7" fill="#1480e8"/><circle cx="7" cy="3.9" r="1.25" fill="#fff"/><path d="M5.4,6 H8 V10.2 H9 V11.3 H5.2 V10.2 H6.2 V7.1 H5.4 Z" fill="#fff"/></svg>
<div class="a" style="left:228.30px;top:542px;font-size:15px;line-height:15px;color:#3a3a3a;transform:scaleX(0.8989);transform-origin:0 0;-webkit-text-stroke:0.25px #3a3a3a;">eRx</div>
<div class="a" style="left:287.70px;top:542px;font-size:15px;line-height:15px;color:#3a3a3a;transform:scaleX(0.9685);transform-origin:0 0;-webkit-text-stroke:0.25px #3a3a3a;">Refill</div>
<div class="a" style="left:365.00px;top:542px;font-size:15px;line-height:15px;color:#3a3a3a;-webkit-text-stroke:0.25px #3a3a3a;">05/09/2021 12:52 PM</div>
<div class="a" style="left:528.30px;top:542px;font-size:15px;line-height:15px;color:#3a3a3a;transform:scaleX(0.9134);transform-origin:0 0;-webkit-text-stroke:0.25px #3a3a3a;">Flake, Raven</div>
<div class="a" style="left:690.30px;top:542px;font-size:15px;line-height:15px;color:#3a3a3a;transform:scaleX(1.0353);transform-origin:0 0;-webkit-text-stroke:0.25px #3a3a3a;">03/29/1997</div>
<div class="a" style="left:784.30px;top:542px;font-size:15px;line-height:15px;color:#3a3a3a;transform:scaleX(0.9317);transform-origin:0 0;-webkit-text-stroke:0.25px #3a3a3a;">Beck, Sharon</div>
<div class="a" style="left:954.40px;top:542px;font-size:15px;line-height:15px;color:#3a3a3a;transform:scaleX(0.8877);transform-origin:0 0;-webkit-text-stroke:0.25px #3a3a3a;">PREDNISONE 10 MG TABLET</div>
<div class="a" style="left:1200.30px;top:542px;font-size:15px;line-height:15px;color:#3a3a3a;transform:scaleX(1.0060);transform-origin:0 0;-webkit-text-stroke:0.25px #3a3a3a;">04/08/2021 07:52 AM</div>
<div class="a" style="left:1358.10px;top:542px;font-size:15px;line-height:15px;color:#3a3a3a;transform:scaleX(0.9589);transform-origin:0 0;-webkit-text-stroke:0.25px #3a3a3a;">Pickup</div>
<div class="a" style="left:1439.00px;top:542px;font-size:15px;line-height:15px;color:#3a3a3a;transform:scaleX(0.9920);transform-origin:0 0;-webkit-text-stroke:0.25px #3a3a3a;">$0.00</div>
<div class="a" style="left:1529.00px;top:542px;font-size:15px;line-height:15px;color:#3a3a3a;transform:scaleX(1.0200);transform-origin:0 0;-webkit-text-stroke:0.25px #3a3a3a;">Ins</div>
<svg class="a" style="left:1569px;top:543px" width="14" height="14" viewBox="0 0 14 14"><circle cx="7" cy="7" r="7" fill="#1480e8"/><circle cx="7" cy="3.9" r="1.25" fill="#fff"/><path d="M5.4,6 H8 V10.2 H9 V11.3 H5.2 V10.2 H6.2 V7.1 H5.4 Z" fill="#fff"/></svg>
<div class="a" style="left:1601px;top:538px;width:145px;height:24px;border:1px solid #c8d0d6;border-radius:3px;background:#fff"></div>
<div class="a" style="left:1609.40px;top:542.5px;font-size:14px;line-height:14px;color:#363636;transform:scaleX(0.9320);transform-origin:0 0;-webkit-text-stroke:0.25px #3a3a3a;">READY FOR PICKUP</div>
<svg class="a" style="left:1756px;top:542px" width="11" height="16" viewBox="0 0 11 16"><path d="M1,0.6 L9.6,8 L1,15.4" fill="none" stroke="#a3a3a3" stroke-width="1.5"/></svg>
<div class="a" style="left:70px;top:573px;width:1704px;height:1px;background:#d6dde2"></div>
<div class="a" style="left:80px;top:588px;width:20px;height:20px;border:1.6px solid #5f5f5f;background:#fff"></div>
<div class="a" style="left:118.30px;top:590px;font-size:15px;line-height:15px;color:#1a76dc;transform:scaleX(0.9880);transform-origin:0 0;-webkit-text-stroke:0.25px #1a76dc;">5063532</div>
<svg class="a" style="left:208px;top:591px" width="14" height="14" viewBox="0 0 14 14"><circle cx="7" cy="7" r="7" fill="#1480e8"/><circle cx="7" cy="3.9" r="1.25" fill="#fff"/><path d="M5.4,6 H8 V10.2 H9 V11.3 H5.2 V10.2 H6.2 V7.1 H5.4 Z" fill="#fff"/></svg>
<div class="a" style="left:228.30px;top:590px;font-size:15px;line-height:15px;color:#3a3a3a;transform:scaleX(0.8989);transform-origin:0 0;-webkit-text-stroke:0.25px #3a3a3a;">eRx</div>
<div class="a" style="left:287.70px;top:590px;font-size:15px;line-height:15px;color:#3a3a3a;transform:scaleX(0.9685);transform-origin:0 0;-webkit-text-stroke:0.25px #3a3a3a;">Refill</div>
<div class="a" style="left:365.00px;top:590px;font-size:15px;line-height:15px;color:#3a3a3a;-webkit-text-stroke:0.25px #3a3a3a;">05/09/2021 07:00 PM</div>
<div class="a" style="left:528.30px;top:590px;font-size:15px;line-height:15px;color:#3a3a3a;transform:scaleX(0.9134);transform-origin:0 0;-webkit-text-stroke:0.25px #3a3a3a;">Flake, Raven</div>
<div class="a" style="left:690.30px;top:590px;font-size:15px;line-height:15px;color:#3a3a3a;transform:scaleX(1.0353);transform-origin:0 0;-webkit-text-stroke:0.25px #3a3a3a;">03/29/1997</div>
<div class="a" style="left:784.30px;top:590px;font-size:15px;line-height:15px;color:#3a3a3a;transform:scaleX(0.9504);transform-origin:0 0;-webkit-text-stroke:0.25px #3a3a3a;">McDonald, Karen Millie</div>
<div class="a" style="left:954.40px;top:590px;font-size:15px;line-height:15px;color:#3a3a3a;transform:scaleX(0.8924);transform-origin:0 0;-webkit-text-stroke:0.25px #3a3a3a;">OXCARBAZEPINE 150 MG TABLET</div>
<div class="a" style="left:1200.30px;top:590px;font-size:15px;line-height:15px;color:#3a3a3a;transform:scaleX(1.0060);transform-origin:0 0;-webkit-text-stroke:0.25px #3a3a3a;">04/08/2021 07:52 AM</div>
<div class="a" style="left:1358.10px;top:590px;font-size:15px;line-height:15px;color:#3a3a3a;transform:scaleX(0.9589);transform-origin:0 0;-webkit-text-stroke:0.25px #3a3a3a;">Pickup</div>
<div class="a" style="left:1439.00px;top:590px;font-size:15px;line-height:15px;color:#3a3a3a;transform:scaleX(0.9920);transform-origin:0 0;-webkit-text-stroke:0.25px #3a3a3a;">$4.32</div>
<div class="a" style="left:1529.00px;top:590px;font-size:15px;line-height:15px;color:#3a3a3a;transform:scaleX(1.0200);transform-origin:0 0;-webkit-text-stroke:0.25px #3a3a3a;">Ins</div>
<svg class="a" style="left:1569px;top:591px" width="14" height="14" viewBox="0 0 14 14"><circle cx="7" cy="7" r="7" fill="#1480e8"/><circle cx="7" cy="3.9" r="1.25" fill="#fff"/><path d="M5.4,6 H8 V10.2 H9 V11.3 H5.2 V10.2 H6.2 V7.1 H5.4 Z" fill="#fff"/></svg>
<div class="a" style="left:1601px;top:586px;width:145px;height:24px;border:1px solid #c8d0d6;border-radius:3px;background:#fff"></div>
<div class="a" style="left:1609.40px;top:590.5px;font-size:14px;line-height:14px;color:#363636;transform:scaleX(0.9320);transform-origin:0 0;-webkit-text-stroke:0.25px #3a3a3a;">READY FOR PICKUP</div>
<svg class="a" style="left:1756px;top:590px" width="11" height="16" viewBox="0 0 11 16"><path d="M1,0.6 L9.6,8 L1,15.4" fill="none" stroke="#a3a3a3" stroke-width="1.5"/></svg>
<div class="a" style="left:70px;top:621px;width:1704px;height:1px;background:#d6dde2"></div>
<div class="a" style="left:80px;top:636px;width:20px;height:20px;border:1.6px solid #5f5f5f;background:#fff"></div>
<div class="a" style="left:118.30px;top:638px;font-size:15px;line-height:15px;color:#1a76dc;transform:scaleX(0.9880);transform-origin:0 0;-webkit-text-stroke:0.25px #1a76dc;">4312006</div>
<div class="a" style="left:208.30px;top:638px;font-size:15px;line-height:15px;color:#3a3a3a;-webkit-text-stroke:0.25px #3a3a3a;">Written</div>
<div class="a" style="left:287.70px;top:638px;font-size:15px;line-height:15px;color:#3a3a3a;transform:scaleX(0.9685);transform-origin:0 0;-webkit-text-stroke:0.25px #3a3a3a;">Refill</div>
<div class="a" style="left:365.00px;top:638px;font-size:15px;line-height:15px;color:#3a3a3a;-webkit-text-stroke:0.25px #3a3a3a;">05/09/2021 03:12 PM</div>
<div class="a" style="left:528.30px;top:638px;font-size:15px;line-height:15px;color:#3a3a3a;transform:scaleX(0.9448);transform-origin:0 0;-webkit-text-stroke:0.25px #3a3a3a;">Smith, Connie</div>
<div class="a" style="left:690.30px;top:638px;font-size:15px;line-height:15px;color:#3a3a3a;transform:scaleX(1.0353);transform-origin:0 0;-webkit-text-stroke:0.25px #3a3a3a;">03/29/1997</div>
<div class="a" style="left:784.30px;top:638px;font-size:15px;line-height:15px;color:#3a3a3a;transform:scaleX(0.9197);transform-origin:0 0;-webkit-text-stroke:0.25px #3a3a3a;">McDonald, George M</div>
<div class="a" style="left:954.40px;top:638px;font-size:15px;line-height:15px;color:#3a3a3a;transform:scaleX(0.8904);transform-origin:0 0;-webkit-text-stroke:0.25px #3a3a3a;">ALBUTEROL HFA 90 MCG INHALER</div>
<div class="a" style="left:1200.30px;top:638px;font-size:15px;line-height:15px;color:#3a3a3a;transform:scaleX(1.0060);transform-origin:0 0;-webkit-text-stroke:0.25px #3a3a3a;">04/08/2021 07:52 AM</div>
<div class="a" style="left:1358.10px;top:638px;font-size:15px;line-height:15px;color:#3a3a3a;transform:scaleX(0.9589);transform-origin:0 0;-webkit-text-stroke:0.25px #3a3a3a;">Pickup</div>
<div class="a" style="left:1439.00px;top:638px;font-size:15px;line-height:15px;color:#3a3a3a;transform:scaleX(0.9956);transform-origin:0 0;-webkit-text-stroke:0.25px #3a3a3a;">$35.80</div>
<div class="a" style="left:1529.00px;top:638px;font-size:15px;line-height:15px;color:#3a3a3a;transform:scaleX(1.0200);transform-origin:0 0;-webkit-text-stroke:0.25px #3a3a3a;">Ins</div>
<svg class="a" style="left:1569px;top:639px" width="14" height="14" viewBox="0 0 14 14"><circle cx="7" cy="7" r="7" fill="#1480e8"/><circle cx="7" cy="3.9" r="1.25" fill="#fff"/><path d="M5.4,6 H8 V10.2 H9 V11.3 H5.2 V10.2 H6.2 V7.1 H5.4 Z" fill="#fff"/></svg>
<div class="a" style="left:1601px;top:634px;width:145px;height:24px;border:1px solid #c8d0d6;border-radius:3px;background:#fff"></div>
<div class="a" style="left:1609.40px;top:638.5px;font-size:14px;line-height:14px;color:#363636;transform:scaleX(0.9320);transform-origin:0 0;-webkit-text-stroke:0.25px #3a3a3a;">READY FOR PICKUP</div>
<svg class="a" style="left:1756px;top:638px" width="11" height="16" viewBox="0 0 11 16"><path d="M1,0.6 L9.6,8 L1,15.4" fill="none" stroke="#a3a3a3" stroke-width="1.5"/></svg>
<div class="a" style="left:70px;top:669px;width:1704px;height:1px;background:#d6dde2"></div>
<div class="a" style="left:80px;top:684px;width:20px;height:20px;border:1.6px solid #5f5f5f;background:#fff"></div>
<div class="a" style="left:118.30px;top:686px;font-size:15px;line-height:15px;color:#1a76dc;transform:scaleX(0.9880);transform-origin:0 0;-webkit-text-stroke:0.25px #1a76dc;">5063673</div>
<div class="a" style="left:208.30px;top:686px;font-size:15px;line-height:15px;color:#3a3a3a;-webkit-text-stroke:0.25px #3a3a3a;">Written</div>
<div class="a" style="left:287.70px;top:686px;font-size:15px;line-height:15px;color:#3a3a3a;transform:scaleX(0.9598);transform-origin:0 0;-webkit-text-stroke:0.25px #3a3a3a;">Auto Refill</div>
<div class="a" style="left:365.00px;top:686px;font-size:15px;line-height:15px;color:#3a3a3a;-webkit-text-stroke:0.25px #3a3a3a;">05/09/2021 02:43 PM</div>
<div class="a" style="left:528.30px;top:686px;font-size:15px;line-height:15px;color:#3a3a3a;transform:scaleX(0.9666);transform-origin:0 0;-webkit-text-stroke:0.25px #3a3a3a;">Williams, Danielle</div>
<div class="a" style="left:690.30px;top:686px;font-size:15px;line-height:15px;color:#3a3a3a;transform:scaleX(1.0353);transform-origin:0 0;-webkit-text-stroke:0.25px #3a3a3a;">03/29/1997</div>
<div class="a" style="left:784.30px;top:686px;font-size:15px;line-height:15px;color:#3a3a3a;transform:scaleX(0.9352);transform-origin:0 0;-webkit-text-stroke:0.25px #3a3a3a;">Akinsaya, Oren</div>
<div class="a" style="left:954.40px;top:686px;font-size:15px;line-height:15px;color:#3a3a3a;transform:scaleX(0.9173);transform-origin:0 0;-webkit-text-stroke:0.25px #3a3a3a;">BREO ELLIPTA 100-25 MCG INH</div>
<div class="a" style="left:1200.30px;top:686px;font-size:15px;line-height:15px;color:#3a3a3a;transform:scaleX(1.0060);transform-origin:0 0;-webkit-text-stroke:0.25px #3a3a3a;">04/08/2021 07:52 AM</div>
<div class="a" style="left:1358.10px;top:686px;font-size:15px;line-height:15px;color:#3a3a3a;transform:scaleX(0.9631);transform-origin:0 0;-webkit-text-stroke:0.25px #3a3a3a;">Delivery</div>
<div class="a" style="left:1439.00px;top:686px;font-size:15px;line-height:15px;color:#3a3a3a;transform:scaleX(0.9956);transform-origin:0 0;-webkit-text-stroke:0.25px #3a3a3a;">$12.09</div>
<div class="a" style="left:1529.00px;top:686px;font-size:15px;line-height:15px;color:#3a3a3a;transform:scaleX(1.0200);transform-origin:0 0;-webkit-text-stroke:0.25px #3a3a3a;">Ins</div>
<svg class="a" style="left:1569px;top:687px" width="14" height="14" viewBox="0 0 14 14"><circle cx="7" cy="7" r="7" fill="#1480e8"/><circle cx="7" cy="3.9" r="1.25" fill="#fff"/><path d="M5.4,6 H8 V10.2 H9 V11.3 H5.2 V10.2 H6.2 V7.1 H5.4 Z" fill="#fff"/></svg>
<div class="a" style="left:1601px;top:682px;width:145px;height:24px;border:1px solid #c8d0d6;border-radius:3px;background:#fff"></div>
<div class="a" style="left:1609.40px;top:686.5px;font-size:14px;line-height:14px;color:#363636;transform:scaleX(0.9320);transform-origin:0 0;-webkit-text-stroke:0.25px #3a3a3a;">READY FOR PICKUP</div>
<svg class="a" style="left:1756px;top:686px" width="11" height="16" viewBox="0 0 11 16"><path d="M1,0.6 L9.6,8 L1,15.4" fill="none" stroke="#a3a3a3" stroke-width="1.5"/></svg>
<div class="a" style="left:70px;top:717px;width:1704px;height:1px;background:#d6dde2"></div>
<div class="a" style="left:80px;top:732px;width:20px;height:20px;border:1.6px solid #5f5f5f;background:#fff"></div>
<div class="a" style="left:118.30px;top:734px;font-size:15px;line-height:15px;color:#1a76dc;transform:scaleX(0.9888);transform-origin:0 0;-webkit-text-stroke:0.25px #1a76dc;">43120917</div>
<div class="a" style="left:208.30px;top:734px;font-size:15px;line-height:15px;color:#3a3a3a;transform:scaleX(0.8969);transform-origin:0 0;-webkit-text-stroke:0.25px #3a3a3a;">Faxed</div>
<div class="a" style="left:287.70px;top:734px;font-size:15px;line-height:15px;color:#3a3a3a;transform:scaleX(0.9598);transform-origin:0 0;-webkit-text-stroke:0.25px #3a3a3a;">Auto Refill</div>
<div class="a" style="left:365.00px;top:734px;font-size:15px;line-height:15px;color:#3a3a3a;-webkit-text-stroke:0.25px #3a3a3a;">05/09/2021 02:55 PM</div>
<div class="a" style="left:528.30px;top:734px;font-size:15px;line-height:15px;color:#3a3a3a;transform:scaleX(0.9124);transform-origin:0 0;-webkit-text-stroke:0.25px #3a3a3a;">Lee, Eloise</div>
<div class="a" style="left:690.30px;top:734px;font-size:15px;line-height:15px;color:#3a3a3a;transform:scaleX(1.0353);transform-origin:0 0;-webkit-text-stroke:0.25px #3a3a3a;">03/29/1997</div>
<div class="a" style="left:784.30px;top:734px;font-size:15px;line-height:15px;color:#3a3a3a;transform:scaleX(0.9487);transform-origin:0 0;-webkit-text-stroke:0.25px #3a3a3a;">Hall, Dennis</div>
<div class="a" style="left:954.40px;top:734px;font-size:15px;line-height:15px;color:#3a3a3a;transform:scaleX(0.8710);transform-origin:0 0;-webkit-text-stroke:0.25px #3a3a3a;">PANADOL CUSTOM DRUG</div>
<div class="a" style="left:1200.30px;top:734px;font-size:15px;line-height:15px;color:#3a3a3a;transform:scaleX(1.0060);transform-origin:0 0;-webkit-text-stroke:0.25px #3a3a3a;">04/08/2021 07:52 AM</div>
<div class="a" style="left:1358.10px;top:734px;font-size:15px;line-height:15px;color:#3a3a3a;transform:scaleX(0.9631);transform-origin:0 0;-webkit-text-stroke:0.25px #3a3a3a;">Delivery</div>
<div class="a" style="left:1439.00px;top:734px;font-size:15px;line-height:15px;color:#3a3a3a;transform:scaleX(0.9956);transform-origin:0 0;-webkit-text-stroke:0.25px #3a3a3a;">$21.00</div>
<div class="a" style="left:1529.00px;top:734px;font-size:15px;line-height:15px;color:#3a3a3a;transform:scaleX(1.0200);transform-origin:0 0;-webkit-text-stroke:0.25px #3a3a3a;">Ins</div>
<svg class="a" style="left:1569px;top:735px" width="14" height="14" viewBox="0 0 14 14"><circle cx="7" cy="7" r="7" fill="#1480e8"/><circle cx="7" cy="3.9" r="1.25" fill="#fff"/><path d="M5.4,6 H8 V10.2 H9 V11.3 H5.2 V10.2 H6.2 V7.1 H5.4 Z" fill="#fff"/></svg>
<div class="a" style="left:1601px;top:730px;width:145px;height:24px;border:1px solid #c8d0d6;border-radius:3px;background:#fff"></div>
<div class="a" style="left:1609.40px;top:734.5px;font-size:14px;line-height:14px;color:#363636;transform:scaleX(0.9320);transform-origin:0 0;-webkit-text-stroke:0.25px #3a3a3a;">READY FOR PICKUP</div>
<svg class="a" style="left:1756px;top:734px" width="11" height="16" viewBox="0 0 11 16"><path d="M1,0.6 L9.6,8 L1,15.4" fill="none" stroke="#a3a3a3" stroke-width="1.5"/></svg>
<div class="a" style="left:70px;top:765px;width:1704px;height:1px;background:#d6dde2"></div>
<div class="a" style="left:80px;top:780px;width:20px;height:20px;border:1.6px solid #5f5f5f;background:#fff"></div>
<div class="a" style="left:118.30px;top:782px;font-size:15px;line-height:15px;color:#1a76dc;transform:scaleX(0.9888);transform-origin:0 0;-webkit-text-stroke:0.25px #1a76dc;">19073780</div>
<div class="a" style="left:208.30px;top:782px;font-size:15px;line-height:15px;color:#3a3a3a;transform:scaleX(0.8969);transform-origin:0 0;-webkit-text-stroke:0.25px #3a3a3a;">Faxed</div>
<div class="a" style="left:287.70px;top:782px;font-size:15px;line-height:15px;color:#3a3a3a;transform:scaleX(0.9598);transform-origin:0 0;-webkit-text-stroke:0.25px #3a3a3a;">Auto Refill</div>
<div class="a" style="left:365.00px;top:782px;font-size:15px;line-height:15px;color:#3a3a3a;transform:scaleX(1.0127);transform-origin:0 0;-webkit-text-stroke:0.25px #3a3a3a;">05/09/2021 10:11 AM</div>
<div class="a" style="left:528.30px;top:782px;font-size:15px;line-height:15px;color:#3a3a3a;transform:scaleX(0.9124);transform-origin:0 0;-webkit-text-stroke:0.25px #3a3a3a;">Lee, Eloise</div>
<div class="a" style="left:690.30px;top:782px;font-size:15px;line-height:15px;color:#3a3a3a;transform:scaleX(1.0353);transform-origin:0 0;-webkit-text-stroke:0.25px #3a3a3a;">03/29/1997</div>
<div class="a" style="left:784.30px;top:782px;font-size:15px;line-height:15px;color:#3a3a3a;transform:scaleX(0.9422);transform-origin:0 0;-webkit-text-stroke:0.25px #3a3a3a;">Patel, Gita</div>
<div class="a" style="left:954.40px;top:782px;font-size:15px;line-height:15px;color:#3a3a3a;transform:scaleX(0.8936);transform-origin:0 0;-webkit-text-stroke:0.25px #3a3a3a;">FENTANYL 50 MCG/HR PATCH</div>
<div class="a" style="left:1200.30px;top:782px;font-size:15px;line-height:15px;color:#3a3a3a;transform:scaleX(1.0060);transform-origin:0 0;-webkit-text-stroke:0.25px #3a3a3a;">04/08/2021 07:52 AM</div>
<div class="a" style="left:1358.10px;top:782px;font-size:15px;line-height:15px;color:#3a3a3a;transform:scaleX(0.9631);transform-origin:0 0;-webkit-text-stroke:0.25px #3a3a3a;">Delivery</div>
<div class="a" style="left:1439.00px;top:782px;font-size:15px;line-height:15px;color:#3a3a3a;transform:scaleX(0.9956);transform-origin:0 0;-webkit-text-stroke:0.25px #3a3a3a;">$51.20</div>
<div class="a" style="left:1529.00px;top:782px;font-size:15px;line-height:15px;color:#3a3a3a;transform:scaleX(1.0200);transform-origin:0 0;-webkit-text-stroke:0.25px #3a3a3a;">Ins</div>
<svg class="a" style="left:1569px;top:783px" width="14" height="14" viewBox="0 0 14 14"><circle cx="7" cy="7" r="7" fill="#1480e8"/><circle cx="7" cy="3.9" r="1.25" fill="#fff"/><path d="M5.4,6 H8 V10.2 H9 V11.3 H5.2 V10.2 H6.2 V7.1 H5.4 Z" fill="#fff"/></svg>
<div class="a" style="left:1601px;top:778px;width:145px;height:24px;border:1px solid #c8d0d6;border-radius:3px;background:#fff"></div>
<div class="a" style="left:1609.40px;top:782.5px;font-size:14px;line-height:14px;color:#363636;transform:scaleX(0.9320);transform-origin:0 0;-webkit-text-stroke:0.25px #3a3a3a;">READY FOR PICKUP</div>
<svg class="a" style="left:1756px;top:782px" width="11" height="16" viewBox="0 0 11 16"><path d="M1,0.6 L9.6,8 L1,15.4" fill="none" stroke="#a3a3a3" stroke-width="1.5"/></svg>
<div class="a" style="left:70px;top:813px;width:1704px;height:1px;background:#d6dde2"></div>
<div class="a" style="left:1387px;top:326px;width:205px;height:63px;background:#424242;border-radius:4px;box-shadow:0 4px 10px rgba(0,0,0,.25)"></div>
<div class="a" style="left:1398.00px;top:340px;font-size:12px;line-height:12px;color:#fff;font-weight:bold;transform:scaleX(0.9636);transform-origin:0 0;">SMS Details</div>
<div class="a" style="left:1398.00px;top:362px;font-size:13px;line-height:13px;color:#b9b9b9;transform:scaleX(0.9104);transform-origin:0 0;">Last sent:</div>
<div class="a" style="left:1455.00px;top:362px;font-size:13px;line-height:13px;color:#f2f2f2;transform:scaleX(0.9839);transform-origin:0 0;">05/10/2021 02:52 PM</div>
<div class="a" style="left:1492px;top:1016px;width:64px;height:32px;border:1px solid #c5d0d8"></div>
<div class="a" style="left:1500px;top:1015px;width:31px;height:3px;background:#fff"></div>
<div class="a" style="left:1502.50px;top:1011.5px;font-size:12px;line-height:12px;color:#7a7a7a;transform:scaleX(0.9091);transform-origin:0 0;">Page</div>
<div class="a" style="left:1500.70px;top:1025px;font-size:15px;line-height:15px;color:#333;transform:scaleX(0.8144);transform-origin:0 0;">1</div>
<svg class="a" style="left:1575px;top:1021px" width="10" height="15" viewBox="0 0 10 15"><path d="M8.6,0.8 L1.6,7.5 L8.6,14.2" fill="none" stroke="#bdbdbd" stroke-width="1.6"/></svg>
<div class="a" style="left:1596.40px;top:1021.3px;font-size:15.5px;line-height:15.5px;color:#333;">1</div>
<svg class="a" style="left:1618px;top:1021px" width="10" height="15" viewBox="0 0 10 15"><path d="M1.2,0.8 L8.2,7.5 L1.2,14.2" fill="none" stroke="#3a3a3a" stroke-width="1.6"/></svg>
<div class="a" style="left:1647.70px;top:1021.3px;font-size:15.5px;line-height:15.5px;color:#333;transform:scaleX(1.0184);transform-origin:0 0;">Show 20 Rows</div>
<svg class="a" style="left:1762px;top:1026px" width="9" height="5.5" viewBox="0 0 9 5.5"><polygon points="0,0 9,0 4.5,5.5" fill="#333"/></svg>
<div class="a" style="left:1847px;top:56px;width:1px;height:1024px;background:#d3dae3"></div>
<div class="a" style="left:1848px;top:127px;width:72px;height:1px;background:#d3dae3"></div>
<div class="a" style="left:1848px;top:199px;width:72px;height:1px;background:#d3dae3"></div>
<div class="a" style="left:1848px;top:271px;width:72px;height:1px;background:#d3dae3"></div>
<div class="a" style="left:1848px;top:343px;width:72px;height:1px;background:#d3dae3"></div>
<div class="a" style="left:1848px;top:415px;width:72px;height:1px;background:#d3dae3"></div>
<div class="a" style="left:1848px;top:487px;width:72px;height:1px;background:#d3dae3"></div>
<div class="a" style="left:1848px;top:559px;width:72px;height:1px;background:#d3dae3"></div>
<div class="a" style="left:1848px;top:864px;width:72px;height:1px;background:#d3dae3"></div>
<div class="a" style="left:1848px;top:936px;width:72px;height:1px;background:#d3dae3"></div>
<div class="a" style="left:1848px;top:1008px;width:72px;height:1px;background:#d3dae3"></div>
<div class="a" style="left:1860.00px;top:85px;font-size:14px;line-height:14px;color:#999;font-weight:bold;transform:scaleX(0.9297);transform-origin:0 0;">F1</div>
<div class="a" style="left:1860.00px;top:157px;font-size:14px;line-height:14px;color:#999;font-weight:bold;transform:scaleX(0.9297);transform-origin:0 0;">F2</div>
<div class="a" style="left:1860.00px;top:229px;font-size:14px;line-height:14px;color:#999;font-weight:bold;transform:scaleX(0.9297);transform-origin:0 0;">F3</div>
<div class="a" style="left:1860.00px;top:301px;font-size:14px;line-height:14px;color:#999;font-weight:bold;transform:scaleX(0.9297);transform-origin:0 0;">F4</div>
<div class="a" style="left:1860.00px;top:373px;font-size:14px;line-height:14px;color:#999;font-weight:bold;transform:scaleX(0.9297);transform-origin:0 0;">F5</div>
<div class="a" style="left:1860.00px;top:445px;font-size:14px;line-height:14px;color:#999;font-weight:bold;transform:scaleX(0.9297);transform-origin:0 0;">F6</div>
<div class="a" style="left:1860.00px;top:517px;font-size:14px;line-height:14px;color:#999;font-weight:bold;transform:scaleX(0.9297);transform-origin:0 0;">F7</div>
<svg class="a" style="left:1880px;top:79px" width="32" height="27" viewBox="0 0 32 27"><circle cx="10" cy="6" r="6" fill="#6e4df5"/><circle cx="24.4" cy="12.4" r="4.6" fill="#6e4df5"/><path d="M0,27 V19 C0,15.5 2.5,13.2 6,13.2 H14 C17,13.2 18.6,14.6 19.8,17.6 H28.6 C30.6,17.6 32,19 32,21.2 V27 Z" fill="#6e4df5"/></svg>
<svg class="a" style="left:1884px;top:149px" width="25" height="29" viewBox="0 0 25 29"><circle cx="12.2" cy="7.3" r="6.5" fill="#1db57c"/><path d="M0,28.7 V22 C0,17.5 2.5,15 6.5,15 H18 C22,15 24.7,17.5 24.7,22 V28.7 Z" fill="#1db57c"/><path d="M6.3,15 V22.5 M18.6,15 V19.5" stroke="#fff" stroke-width="1"/><circle cx="6.3" cy="23.2" r="1.6" fill="#fff"/><path d="M15.2,25.8 V23.5 C15.2,21.4 16.6,20 18.6,20 C20.6,20 22,21.4 22,23.5 V25.8" fill="none" stroke="#fff" stroke-width="1.1"/><path d="M7.3,15 L12.2,21.5 L17.6,15" fill="none" stroke="#fff" stroke-width="0.9"/></svg>
<svg class="a" style="left:1884px;top:222px" width="24" height="28" viewBox="0 0 24 28"><path d="M12,0 C9,2.5 5,4 0,4.5 V14 C0,21 5,26 12,28 C19,26 24,21 24,14 V4.5 C19,4 15,2.5 12,0 Z" fill="#1b8cf2"/><path d="M12,8.5 V20 M6,14.2 H18" stroke="#fff" stroke-width="2"/></svg>
<svg class="a" style="left:1882px;top:295px" width="28" height="27" viewBox="0 0 28 27"><g transform="rotate(20 9 13)"><rect x="3" y="0.5" width="12.4" height="25" rx="6.2" fill="#f9c54a"/><path d="M3,13 V6.7 C3,3.3 5.8,0.5 9.2,0.5 C12.6,0.5 15.4,3.3 15.4,6.7 V13 Z" fill="#f26b3a"/></g><circle cx="22.3" cy="19.8" r="5.4" fill="#f08a3c"/><path d="M18.6,23.5 L26,16.1" stroke="#fff" stroke-width="1.1"/><path d="M18.5,23.5 A5.4,5.4 0 0 1 26,16.1" fill="#ee6b3a"/></svg>
<svg class="a" style="left:1882px;top:365px" width="28" height="30" viewBox="0 0 28 30"><rect x="7" y="0" width="14" height="9" fill="#8fd0cc"/><path d="M14,1.8 V7.4 M11.2,4.6 H16.8" stroke="#fff" stroke-width="2.1"/><path d="M1.3,5 H5.5 V9.5 H22.5 V5 H26.7 L28,11 V14.6 C25.5,16 23,16 20.5,14.9 C18,16 15.5,16 13,14.9 C10.5,16 8,16 5.5,14.9 C3.5,16 1.5,15.8 0,14.6 V11 Z" fill="#0f4fa8"/><path d="M1,16.5 C3.3,17.5 5.8,17.5 8,16.6 C10.3,17.5 12.7,17.5 14,16.6 C16.3,17.5 18.7,17.5 21,16.6 C23.3,17.5 25.5,17.5 27,16.5 V30 H18.3 V21.8 H9.8 V30 H1 Z" fill="#0f4fa8"/></svg>
<svg class="a" style="left:1882px;top:440px" width="28" height="25" viewBox="0 0 28 25"><path d="M1.3,13 L14,2.8 L26.7,13" fill="none" stroke="#ef4a3a" stroke-width="2.6"/><path d="M4,13.5 L14,5.5 L24,13.5 V25 H4 Z" fill="#ef4a3a"/><path d="M14,12.3 V21 M9.7,16.6 H18.3" stroke="#fff" stroke-width="2.6"/></svg>
<svg class="a" style="left:1886px;top:509px" width="20" height="28" viewBox="0 0 20 28"><rect x="6.2" y="0" width="7.6" height="4.5" fill="#148a90"/><circle cx="10" cy="10" r="6.6" fill="#148a90"/><circle cx="10" cy="3.3" r="1.6" fill="#fff"/><path d="M0,27.8 V21.8 C0,19.3 1.8,18 4,18 C6,19.4 8,20 10,20 C12,20 14,19.4 16,18 C18.2,18 20,19.3 20,21.8 V27.8 Z" fill="#148a90"/></svg>
<svg class="a" style="left:1873px;top:887px" width="23" height="26" viewBox="0 0 23 26"><path fill-rule="evenodd" fill="#333" d="M2.5,0 H20 Q22.5,0 22.5,2.5 V23.1 Q22.5,25.6 20,25.6 H2.5 Q0,25.6 0,23.1 V2.5 Q0,0 2.5,0 Z M3.1,3 V10 H19.6 V3 Z M3.1,13 V16.3 H7 V13 Z M9.8,13 V16.3 H13.3 V13 Z M3.1,19.3 V22.9 H7 V19.3 Z M9.8,19.3 V22.9 H13.3 V19.3 Z M16.3,13 V22.9 H19.6 V13 Z"/></svg>
<svg class="a" style="left:1870px;top:958px" width="48" height="30" viewBox="0 0 48 30"><circle cx="14" cy="14" r="13.1" fill="#000"/><rect x="12.9" y="8.2" width="17" height="12.8" rx="3.5" fill="#fff"/><rect x="15.9" y="10.1" width="9.4" height="8.9" rx="2" fill="#000"/><path d="M25.3,6 H30 V23 H25.3 A13.1,13.1 0 0 0 25.3,6 Z" fill="#fff"/><rect x="31.9" y="7.6" width="12.3" height="12.6" rx="1" fill="none" stroke="#444" stroke-width="1.4"/><path d="M34.6,17.2 L40.8,11 M36.4,10.6 H41.3 V15.5" fill="none" stroke="#444" stroke-width="1.7"/></svg>
<svg class="a" style="left:1872px;top:1032px" width="24" height="24" viewBox="0 0 24 24"><circle cx="12" cy="12" r="10.9" fill="none" stroke="#aaa" stroke-width="2"/><path d="M8.3,8.2 C8.8,6.1 10.2,5.2 12.1,5.2 C14.4,5.2 15.9,6.5 15.9,8.4 C15.9,10.9 12.6,11.3 12.1,14.2" fill="none" stroke="#aaa" stroke-width="2.5"/><ellipse cx="12" cy="17.3" rx="1.9" ry="1.6" fill="#aaa"/></svg>
</body></html>
